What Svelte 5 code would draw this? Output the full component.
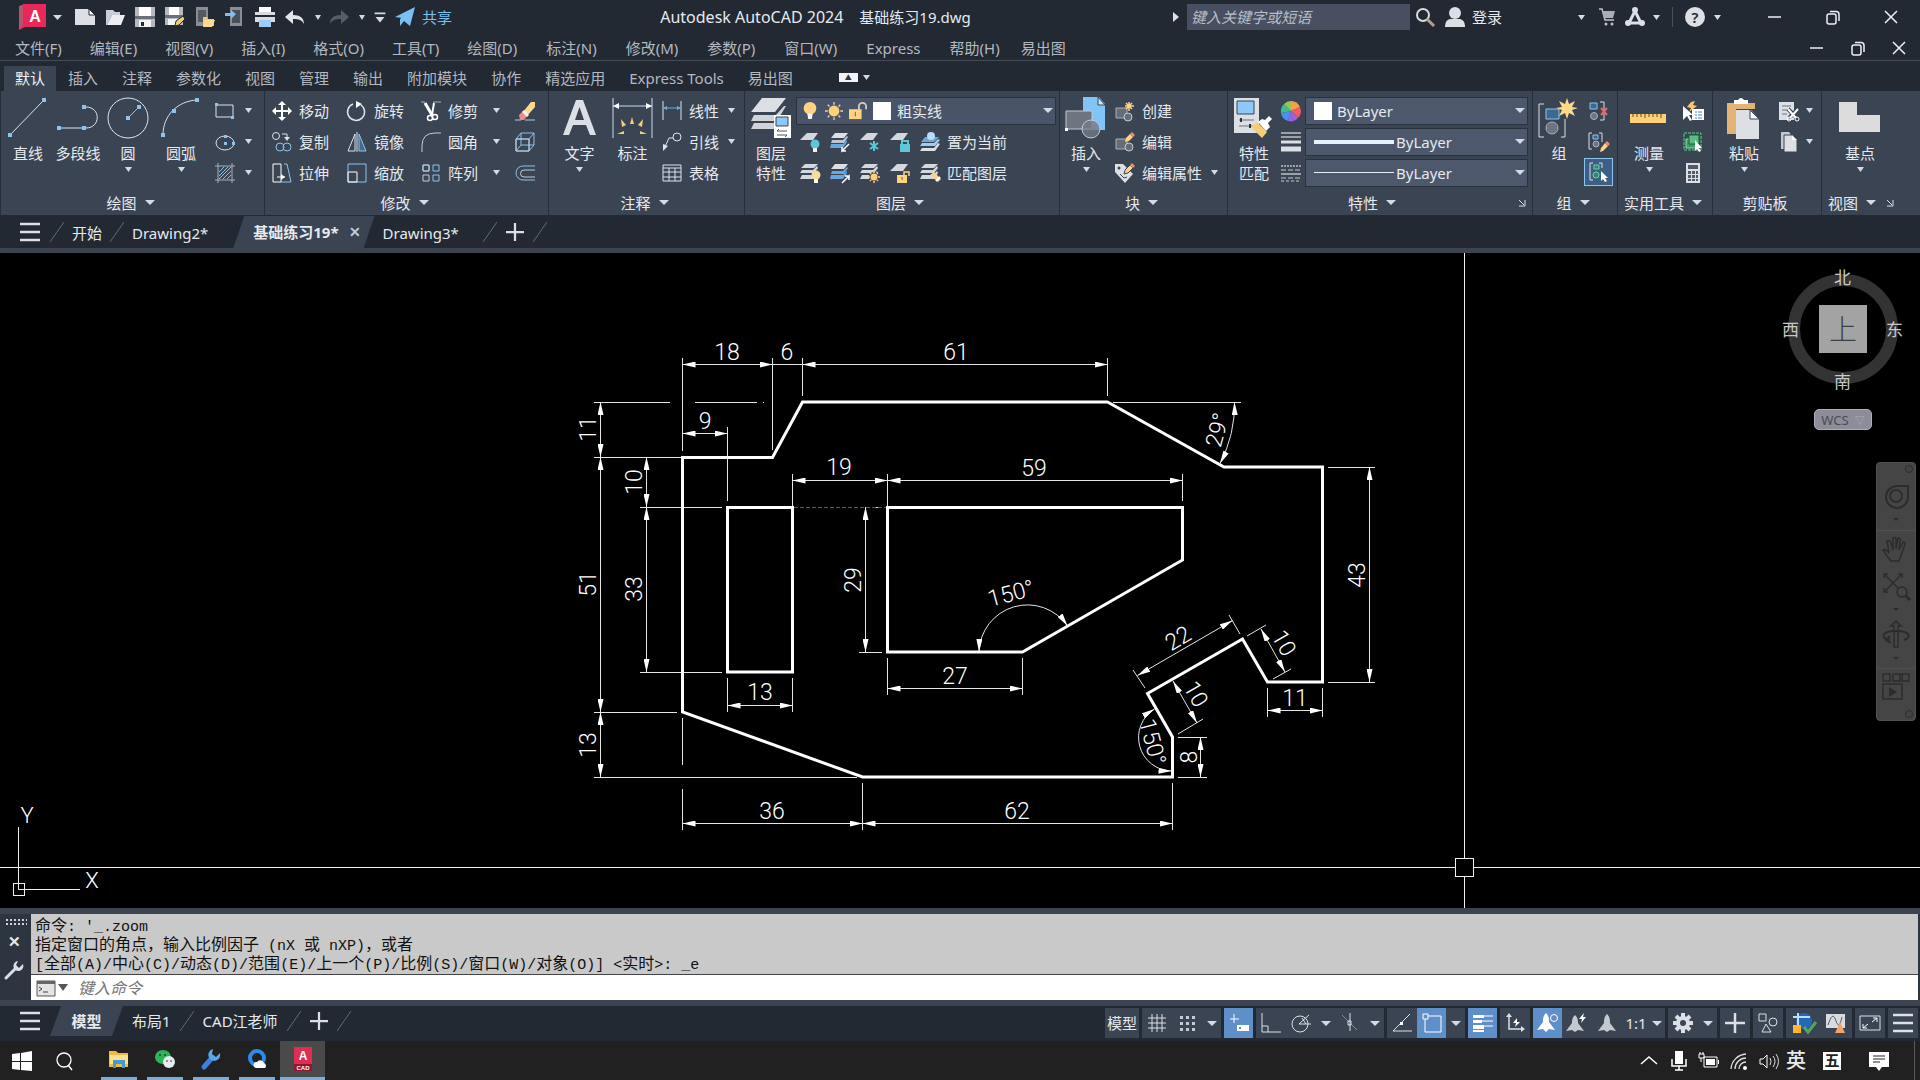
<script>
  // 20x20 and 40x40 line icons, keyed by command
  const icons = {
    // quick access
    newFile: '<path d="M0 2h13l7 6v10H0z" fill="#dcdfe4"/><path d="M14 2l6 6h-6z" fill="#fff" stroke="#222933"/>',
    open: '<path d="M1 18V3h7l2 2h5v3H7L2 18z" fill="#c9ced6"/><path d="M7 8h13l-4 10H2z" fill="#eceef2"/>',
    save: '<path d="M0 0h20v20H0z" fill="#b6bac0"/><path d="M4 0h12v9H4z" fill="#fff"/><path d="M0 9h20v3H0z" fill="#6a7079"/><path d="M4 13h12v7H4z" fill="#f4f4f4"/><path d="M6 15h3v4H6z" fill="#222933"/>',
    saveAs: '<path d="M0 0h18v18H0z" fill="#b6bac0"/><path d="M4 0h10v8H4z" fill="#fff"/><path d="M0 8h18v3H0z" fill="#6a7079"/><path d="M3 12h9v6H3z" fill="#f4f4f4"/><path d="M10 19l1-5 7-5 2 3-6 6z" fill="#f3cd7d" stroke="#222933"/>',
    openPhone: '<path d="M1 0h12v19H1z" fill="#8a8d92"/><path d="M3 3h8v12H3z" fill="#555a61"/><path d="M8 19V10h4l1 2h6v7z" fill="#f5c977"/><path d="M10 13h10l-3 7H8z" fill="#ffdb95"/>',
    savePhone: '<path d="M5 0h12v19H5z" fill="#8a8d92"/><path d="M7 3h8v13H7z" fill="#49505a"/><path d="M0 6h6V3l5 4-5 5V9H0z" fill="#7cc0f2"/>',
    print: '<path d="M4 0h12v6H4z" fill="#fff"/><path d="M0 5h20v10H0z" fill="#d8dbe0"/><path d="M0 8h20v2H0z" fill="#222933"/><path d="M4 13h12v7H4z" fill="#9ccdf5"/>',
    undo: '<path d="M8 3v5c7 0 11 3 11 9-2-4-5-5-11-5v5L0 10z" fill="#e1e4e9"/>',
    redo: '<path d="M12 3v5C5 8 1 11 1 17c2-4 5-5 11-5v5l8-7z" fill="#565d67"/>',
    customize: '<path d="M4 5h12v2H4zM5 10h10l-5 6z" fill="#d8dbe0"/>',
    plane: '<path d="M0 10L20 0l-5 19-6-5-4 5v-7l10-8-8 7z" fill="#7cc0f2"/>',
    magnifier: '<circle cx="8" cy="8" r="6" fill="none" stroke="#d8dbe0" stroke-width="2"/><path d="M12 12l7 7" stroke="#b0a08e" stroke-width="3"/>',
    user: '<circle cx="10" cy="6" r="6" fill="#dcdfe4"/><path d="M0 20c0-6 3-8 6-8h8c3 0 6 2 6 8z" fill="#dcdfe4"/>',
    cart: '<path d="M2 2h3l3 11h9" fill="none" stroke="#c0c4ca" stroke-width="1.5"/><path d="M5 4h13l-2 7H7z" fill="#a9adb4"/><circle cx="9" cy="17" r="1.5" fill="#c0c4ca"/><circle cx="15" cy="17" r="1.5" fill="#c0c4ca"/>',
    apps: '<path d="M10 4L4 16h12z" fill="none" stroke="#dcdfe4" stroke-width="3"/><circle cx="10" cy="3" r="3" fill="#dcdfe4"/><circle cx="3" cy="16" r="3" fill="#dcdfe4"/><circle cx="17" cy="16" r="3" fill="#dcdfe4"/>',
    minimize: '<path d="M3 10h13" stroke="currentColor" stroke-width="1.5"/>',
    restore: '<rect x="4" y="7" width="9" height="10" rx="2" fill="none" stroke="currentColor" stroke-width="1.5"/><path d="M7 4.500h6q3 0 3 3V14" fill="none" stroke="currentColor" stroke-width="1.5"/>',
    close: '<path d="M4 4l12 12M16 4L4 16" stroke="currentColor" stroke-width="1.5"/>',
    // draw
    line: '<path d="M3 38L37 3" stroke="#dce3ee"/><path d="M1 36h4v4H1zM35 1h4v4h-4z" fill="#8cc4f0"/>',
    polyline: '<path d="M2 31h27c15 0 15-21 0-21" fill="none" stroke="#dce3ee"/><path d="M0 29h4v4H0zM25 29h4v4h-4zM25 8h4v4h-4z" fill="#8cc4f0"/>',
    circle: '<circle cx="21" cy="21" r="20" fill="none" stroke="#dce3ee"/><path d="M21 21L32 10" stroke="#8cc4f0"/><path d="M19 19h4v4h-4zM30 8h4v4h-4z" fill="#8cc4f0"/>',
    arc: '<path d="M3 38C3 18 18 4 37 3" fill="none" stroke="#dce3ee"/><path d="M1 36h4v4H1zM12 12h4v4h-4zM35 1h4v4h-4z" fill="#8cc4f0"/>',
    rect: '<path d="M1 4h17v12H1z" fill="none" stroke="#dce3ee"/><path d="M0 2h3v3H0zM16 15h3v3h-3z" fill="#8cc4f0"/>',
    ellipse: '<ellipse cx="10" cy="11" rx="9" ry="7" fill="none" stroke="#dce3ee"/><path d="M9 3h3v3H9zM9 10h3v3H9zM17 10h3v3h-3z" fill="#8cc4f0"/>',
    hatch: '<path d="M3 0v20M17 0v20M0 3h20M0 17h20" stroke="#a8afba"/><path d="M4 9l5-5M4 13l9-9M4 16L16 4M8 16l8-8M12 16l4-4" stroke="#8cc4f0"/>',
    // modify
    move: '<path d="M10 0l4 4h-3v5h5V6l4 4-4 4v-3h-5v5h3l-4 4-4-4h3v-5H4v3l-4-4 4-4v3h5V4H6z" fill="#fff"/>',
    rotate: '<path d="M14 4a8.500 8.500 0 1 1-8-1" fill="none" stroke="#dce3ee" stroke-width="1.5"/><path d="M9 0l6 3-6 4z" fill="#fff"/>',
    trim: '<path d="M0 1h4M12 1h8" stroke="#a8afba"/><path d="M4 2l7 12" stroke="#fff" stroke-width="3"/><path d="M13 2l-2 12" stroke="#fff" stroke-width="2"/><circle cx="9" cy="17" r="2.500" fill="none" stroke="#fff" stroke-width="1.500"/><circle cx="14" cy="16" r="2.500" fill="none" stroke="#fff" stroke-width="1.500"/>',
    erase: '<path d="M0 19h6M10 19h10" stroke="#a8cdf0"/><path d="M8 11l8-10h4v5l-8 9z" fill="#ffd98c"/><path d="M4 14l4-4 5 4-4 5H5z" fill="#f08a84"/><path d="M7 11l2-2 5 5-2 2z" fill="#f2f2f2"/>',
    copy: '<circle cx="4" cy="4" r="3.500" fill="none" stroke="#dce3ee"/><path d="M10 2h5v4" fill="none" stroke="#dce3ee"/><path d="M12 5h6l-3 4z" fill="#dce3ee"/><circle cx="8" cy="15" r="4" fill="none" stroke="#8cc4f0"/><circle cx="15" cy="15" r="4" fill="none" stroke="#8cc4f0"/>',
    mirror: '<path d="M8 2v17H1z" fill="none" stroke="#dce3ee"/><path d="M12 2v17h7z" fill="#476a8c" stroke="#8cc4f0"/><path d="M10 0v20" stroke="#dce3ee"/>',
    fillet: '<path d="M1 20v-6Q1 1 14 1h6" fill="none" stroke="#c4cad4"/>',
    box: '<path d="M6 1h13v12l-5 6V7l5-6M1 7l5-6M14 7H1v12h13M6 1v12h13M6 13l-5 6" fill="none" stroke="#8cc4f0"/><path d="M1 7h13v12H1z" fill="none" stroke="#c4cad4"/>',
    stretch: '<path d="M1 1h8v18H1z" fill="none" stroke="#fff"/><path d="M12 1h3l4 18H9" fill="none" stroke="#8cc4f0"/><path d="M5 14h8" stroke="#fff"/><path d="M9 11l4 3-4 3z" fill="#fff"/>',
    scale: '<path d="M1 1h18v18H1z" fill="none" stroke="#8cc4f0"/><path d="M1 9h9v10H1z" fill="none" stroke="#fff"/>',
    array: '<path d="M2 2h6v6H2zM12 2h6v6h-6zM12 12h6v6h-6z" fill="none" stroke="#8cc4f0"/><path d="M2 12h6v6H2zM2 2h6v6H2z" fill="none" stroke="#c4cad4"/>',
    offset: '<path d="M20 3H8a7 7 0 0 0 0 14h12" fill="none" stroke="#8cc4f0"/><path d="M20 7H9a3.500 3.500 0 0 0 0 7h11" fill="none" stroke="#c4cad4"/>',
    // annotation
    text: '<path d="M4 38L17 3h7l13 35h-6l-4-10H14l-4 10zM16 23h9L20.500 10z" fill="#dcdfe6" fill-rule="evenodd"/>',
    dimension: '<path d="M1 1v40M40 1v40M1 9h39" stroke="#c9dcf0"/><path d="M1 9l6-3v6zM40 9l-6-3v6z" fill="#fff"/><g fill="#f5cd7a"><path d="M18 27l2-7 2 7zM10 30l-1-8 5 6zM30 30l1-8-5 6zM5 37l7-3v3zM35 37l-7-3v3z"/></g>',
    linear: '<path d="M1 0v19M19 0v19" stroke="#dce3ee"/><path d="M1 7h18" stroke="#6daee6"/><path d="M1 7l4-2v4zM19 7l-4-2v4z" fill="#6daee6"/>',
    leader: '<circle cx="15" cy="5" r="4" fill="none" stroke="#dce3ee"/><path d="M11 6H7L2 17" fill="none" stroke="#dce3ee"/><path d="M1 19v-7l5 2z" fill="#dce3ee"/>',
    table: '<path d="M1 2h18v16H1zM1 5h18M1 9h18M1 14h18M7 5v13M13 5v13" fill="none" stroke="#dce3ee"/>',
    // layers
    layerProps: '<path d="M12 1h24l-11 14H1z" fill="#dcdfe4"/><path d="M4 18h22l8-9h2l-9 15H1zM4 26h20v6H1z" fill="#d0d4da"/><path d="M24 18h17v23H24z" fill="#fff"/><path d="M26 20h12v9H26z" fill="#8cc8fa" stroke="#3b4453"/><path d="M27 34h10M27 38h10M29 32l-2 2M35 40l2-2" stroke="#555"/>',
    bulb: '<circle cx="10" cy="7" r="7" fill="#ffd284"/><path d="M7 13h6l-1 6H8z" fill="#f2f5fa"/>',
    sun: '<circle cx="10" cy="10" r="6" fill="#ffcf7a"/><path d="M10 0v3M10 17v3M0 10h3M17 10h3M3 3l2 2M15 15l2 2M3 17l2-2M15 5l2-2" stroke="#e8d5ae" stroke-width="1.5"/>',
    unlock: '<path d="M0 8h14v11H0z" fill="#ffd284"/><path d="M11 8V5a4 4 0 0 1 8 0v3" fill="none" stroke="#d5ceba" stroke-width="2"/><path d="M7 11v5" stroke="#6b5a36"/>',
    layOff: '<path d="M7 1h11l-5 7H0z" fill="#d4d8de"/><circle cx="15" cy="12" r="4.500" fill="#5bc7d8"/><path d="M13 16h4v4h-4z" fill="#f2f5fa"/>',
    layIso: '<path d="M5 1h13l-4 5H1z" fill="#dcdfe4"/><path d="M2 8h11l4-4 1 1-4 6H1z" fill="#c0c5cd"/><path d="M1 12h12l4-4v2l-4 6H0z" fill="#67a8df"/><path d="M19 12l-7 7v-4m0 4h4" stroke="#fff" stroke-width="1.500" fill="none"/>',
    layFreeze: '<path d="M7 1h11l-5 7H0z" fill="#d4d8de"/><path d="M14 9v10M10 11l8 6M18 11l-8 6" stroke="#5bc7d8" stroke-width="2"/>',
    layLock: '<path d="M7 1h11l-5 7H0z" fill="#d4d8de"/><path d="M10 12h10v8H10z" fill="#5bc7d8"/><path d="M12 12V9h6v3" fill="none" stroke="#5bc7d8" stroke-width="2"/>',
    layCurrent: '<path d="M5 5h14l-5 5H1z" fill="#67a8df"/><path d="M2 11h12l4-4 2 1-5 6H0z" fill="#9ccdf5"/><path d="M2 16h12l4-5 2 1-5 7H0z" fill="#dcdfe4"/><circle cx="11" cy="4" r="4" fill="#b9dcf9"/>',
    layOn: '<path d="M5 1h13l-4 4H1zM2 7h11l4-4 1 2-4 5H0zM2 12h11l4-4 1 2-4 6H0z" fill="#d4d8de"/><circle cx="16" cy="12" r="4.500" fill="#f6dc96"/><path d="M14 16h4v4h-4z" fill="#fff"/>',
    layUniso: '<path d="M5 1h13l-4 5H1z" fill="#dcdfe4"/><path d="M2 8h11l4-4 1 1-4 6H1zM1 12h12l4-4v2l-4 6H0z" fill="#67a8df"/><path d="M12 20l7-7v4m0-4h-4" stroke="#fff" stroke-width="1.500" fill="none"/>',
    layThaw: '<path d="M5 1h13l-4 4H1zM2 7h11l4-4 1 2-4 5H0zM2 12h11l4-4 1 2-4 6H0z" fill="#d4d8de"/><circle cx="14" cy="14" r="5" fill="#3b4453"/><circle cx="14" cy="14" r="3.500" fill="#ffcf7a"/><path d="M14 8v2M14 18v2M8 14h2M18 14h2M10 10l1 1M18 10l-1 1M10 18l1-1M18 18l-1-1" stroke="#ffcf7a" stroke-width="1.5"/>',
    layUnlock: '<path d="M7 1h11l-5 7H0z" fill="#d4d8de"/><path d="M7 12h10v8H7z" fill="#ffd284"/><path d="M14 12V9h5v4" fill="none" stroke="#ffd284" stroke-width="1.5"/><path d="M12 14v3" stroke="#6b5a36"/>',
    layMatch: '<path d="M5 1h13l-4 4H1zM2 7h11l4-4 1 2-4 5H0zM2 12h11l4-4 1 2-4 6H0z" fill="#d4d8de"/><path d="M10 12l4-3 7 7-3 3z" fill="#f5d494"/><path d="M16 18l4-4" stroke="#fff" stroke-width="2"/>',
    // block
    insert: '<path d="M18 0h16l6 7v26H18z" fill="#82c4f7"/><path d="M33 0v8h7z" fill="#cbe6fc" stroke="#3b4453"/><path d="M1 14h26v18H1z" fill="#6e7480" stroke="#c4cad4"/><circle cx="26" cy="32" r="9" fill="#747b87" fill-opacity=".8" stroke="#c4cad4"/><path d="M0 31h3v3H0z" fill="#fff"/>',
    create: '<path d="M1 7h11v10H1z" fill="#666d79" stroke="#a9b0bb"/><circle cx="13" cy="16" r="4" fill="#666d79" stroke="#c4cad4"/><path d="M14 1v9M10 5h9M11 2l6 6M17 2l-6 6" fill="none" stroke="#ffd284" stroke-width="1.500"/>',
    edit: '<path d="M1 7h11v10H1z" fill="#666d79" stroke="#a9b0bb"/><circle cx="14" cy="15" r="4" fill="#666d79" stroke="#c4cad4"/><path d="M10 10l1-4 4-4 3 3-4 4z" fill="#ffd284"/><path d="M15 2l2-2 3 3-2 2z" fill="#ee8b78"/>',
    editAttr: '<path d="M0 1h8l10 10-8 9L0 9z" fill="#dcdfe4"/><circle cx="4" cy="5" r="1.500" fill="#3b4453"/><path d="M9 11l1-4 5-5 3 3-5 5z" fill="#ffd284" stroke="#3b4453"/><path d="M15 2l2-2 3 3-2 2z" fill="#ee8b78"/><path d="M5 11l4 4 3-1" stroke="#3b4453" fill="none"/>',
    // properties
    matchProps: '<path d="M1 1h25v35H1z" fill="#dcdfe4"/><path d="M4 4h17v13H4z" fill="#8cc8fa" stroke="#3b4453"/><path d="M6 23h15M6 29h15" stroke="#6a7079"/><path d="M8 21v4M17 27v4" stroke="#333" stroke-width="2"/><path d="M18 30l6-5 10 10-5 6z" fill="#f5cd7a"/><path d="M25 25l4-3 3 1 4-4 3 3-4 4 2 4-4 4z" fill="#fff"/>',
    wheel: '<path d="M10 10V0a10 10 0 0 1 9 6z" fill="#f6a04c"/><path d="M10 10l9-4a10 10 0 0 1-2 11z" fill="#ef5d60"/><path d="M10 10l7 7a10 10 0 0 1-10 3z" fill="#9c5fe0"/><path d="M10 10L7 20a10 10 0 0 1-7-8z" fill="#4c8ff0"/><path d="M10 10L0 12a10 10 0 0 1 3-9z" fill="#3cbf8c"/><path d="M10 10L3 3a10 10 0 0 1 7-3z" fill="#9bc553"/>',
    weights: '<path d="M0 1h20M0 5h20" stroke="#fff"/><path d="M0 10h20" stroke="#dcdfe4" stroke-width="3"/><path d="M0 17h20" stroke="#dcdfe4" stroke-width="5"/>',
    linetypes: '<path d="M0 3h20" stroke-dasharray="2 1" stroke="#fff"/><path d="M0 7h20M0 15h20" stroke-dasharray="5 2" stroke="#c4cad4"/><path d="M0 11h20" stroke="#fff"/><path d="M0 18h20" stroke-dasharray="3 2" stroke="#c4cad4"/>',
    // groups and utilities
    group: '<path d="M6 7H1v33h5M23 40h4V22" fill="none" stroke="#dcdfe4"/><path d="M8 12h13v10H8z" fill="#3d6890" stroke="#8cc4f0"/><circle cx="14" cy="31" r="6" fill="#6e7480" stroke="#a9b0bb"/><path d="M29 1l2 6 6-3-3 6 6 1-6 2 3 6-6-3-2 6-2-6-6 3 3-6-6-2 6-1-3-6 6 3z" fill="#ffd88c"/>',
    ungroup: '<path d="M1 2h7v6H1z" fill="#3d6890" stroke="#8cc4f0"/><circle cx="5" cy="15" r="3.500" fill="#6e7480" stroke="#a9b0bb"/><path d="M11 1h4v18h-4" fill="none" stroke="#dcdfe4"/><path d="M12 7l6 7M18 7l-6 7" stroke="#e8696b" stroke-width="2"/>',
    groupEdit: '<path d="M3 1H0v16h3M10 1h3v9" fill="none" stroke="#dcdfe4"/><path d="M4 3h5v4H4z" fill="#3d6890" stroke="#8cc4f0"/><circle cx="7" cy="12" r="3" fill="#6e7480" stroke="#a9b0bb"/><path d="M11 20l1-4 4-5 3 3-5 5z" fill="#ffd284"/><path d="M16 11l2-2 3 3-2 2z" fill="#ee8b78"/>',
    groupSelect: '<path d="M4 1H1v17h3M10 1h3v5" fill="none" stroke="#dcdfe4"/><path d="M5 3h5v4H5z" fill="#2c8a6a" stroke="#71cda8"/><circle cx="7" cy="13" r="3" fill="#2c8a6a" stroke="#71cda8"/><path d="M12 9v10l2-2 2 3 2-1-2-3h3z" fill="#fff"/>',
    measure: '<path d="M2 17h36v9H2z" fill="#ffcf7a"/><path d="M5 17v3M9 17v3M13 17v3M17 17v4M21 17v3M25 17v3M29 17v3M33 17v4" stroke="#5d4a22"/>',
    quickSelect: '<path d="M8 1l-4 5 4 1-2 4 8-6-4-1 2-4z" fill="#ffc46c"/><path d="M0 5v14l4-4 3 5 2-1-3-5h4z" fill="#fff"/><path d="M9 8h12v11H9z" fill="#fff"/><path d="M12 11h2M12 14h2M12 17h2M15 11h4M15 14h4M15 17h4" stroke="#3d7fc0"/>',
    selectAll: '<path d="M1 1h17v17H1z" fill="none" stroke="#5fd08c" stroke-dasharray="3 1"/><path d="M3 7h10v9H3z" fill="#3d9c66" stroke="#8be0ad"/><path d="M6 3h10v9H6z" fill="#5cbb84" stroke="#1f5d3b"/><path d="M12 8v11l2-2 2 3 2-1-2-3h3z" fill="#fff"/>',
    calculator: '<path d="M3 0h14v20H3z" fill="#dcdfe4"/><path d="M5 2h10v4H5z" fill="#51596a"/><path d="M5 8h3v3H5zM9 8h3v3H9zM13 8h2v3h-2zM5 12h3v3H5zM9 12h3v3H9zM13 12h2v3h-2zM5 16h3v2H5zM9 16h3v2H9zM13 16h2v2h-2z" fill="#51596a"/>',
    paste: '<path d="M4 6h28v6H13v25H4z" fill="#e2b377"/><path d="M11 3h4q3-4 6 0h4v4H11z" fill="#fff"/><path d="M13 13h15l8 9v20H13z" fill="#dcdfe4"/><path d="M27 13v9h9z" fill="#fff" stroke="#3b4453"/>',
    cut: '<path d="M1 1h15v18H1z" fill="#dcdfe4"/><path d="M4 5h9M4 9h6M4 13h5" stroke="#6a7079"/><path d="M10 8l9 9M20 8l-9 9" stroke="#3b4453" stroke-width="4"/><path d="M10 8l8 9M20 8l-8 9" stroke="#fff" stroke-width="2"/><circle cx="11" cy="18" r="2" fill="none" stroke="#fff"/><circle cx="19" cy="18" r="2" fill="none" stroke="#fff"/>',
    copyClip: '<path d="M3 0h8l2 3v14H3z" fill="#c4cad4"/><path d="M6 3h8l5 5v12H6z" fill="#dcdfe4" stroke="#3b4453"/><path d="M14 3v5h5z" fill="#fff"/>',
    base: '<path d="M0 5h18v13h23v17H0z" fill="#dcdcdc"/>',
    // status bar
    grid: '<path d="M5 1v18M10 1v18M15 1v18M1 5h18M1 10h18M1 15h18" stroke="#dcdfe6"/>',
    snap: '<path d="M3 3h3v3H3zM9 3h3v3H9zM15 3h3v3h-3zM3 9h3v3H3zM9 9h3v3H9zM15 9h3v3h-3zM3 15h3v3H3zM9 15h3v3H9zM15 15h3v3h-3z" fill="#c4cad4"/>',
    dynInput: '<path d="M5 1v9M1 6h9" stroke="#fff"/><path d="M8 12h12v6H8z" fill="#fff"/><path d="M10 14h2v2h-2z" fill="#5f8fc9"/>',
    ortho: '<path d="M1 0v19h19M1 13h6v6" fill="none" stroke="#dcdfe6"/>',
    polar: '<circle cx="9" cy="11" r="8" fill="none" stroke="#dcdfe6"/><path d="M20 11H8l10-9M11 5l4 6" fill="none" stroke="#dcdfe6"/>',
    iso: '<path d="M10 0v18" stroke="#dcdfe6"/><path d="M2 2l15 15" stroke="#a3837c"/><path d="M8 8h3v4H8z" fill="none" stroke="#dcdfe6"/>',
    track: '<path d="M18 1L1 18h19" fill="none" stroke="#dcdfe6"/><path d="M8 9h3v3H8z" fill="#fff"/>',
    osnap: '<path d="M3 3h16v16H3z" fill="none" stroke="#fff"/><path d="M1 1h5v5H1z" fill="#5f8fc9" stroke="#fff"/>',
    lineWeight: '<path d="M0 3h20M0 8h20M0 13h20" stroke="#fff"/><path d="M0 2h11v3H0zM0 7h9v3H0zM0 12h11v4H0zM0 17h11v2H0z" fill="#fff"/>',
    ucs: '<path d="M4 3v13h13" fill="none" stroke="#dcdfe6" stroke-width="1.5"/><path d="M1 4l3-4 3 4zM16 13l4 3-4 3z" fill="#dcdfe6"/><path d="M12 5l-4 5h3l-1 4 5-5h-3z" fill="#fff"/>',
    annoVis: '<path d="M8 0c3 3 3 6 3 9l6 8-6-1-3 3-3-3-6 1 6-8c0-3 0-6 3-9z" fill="#fff"/><circle cx="16" cy="5" r="3.500" fill="none" stroke="#fff"/>',
    annoAuto: '<path d="M8 2c3 3 3 5 3 8l6 8-6-1-3 2-3-2-6 1 6-8c0-3 0-5 3-8z" fill="#c4c8d0"/><path d="M17 0l-5 6h3l-1 4 5-6h-3z" fill="#fff"/>',
    annoScale: '<path d="M10 1c3 3 3 6 3 9l6 8-6-1-3 2-3-2-6 1 6-8c0-3 0-6 3-9z" fill="#c4c8d0"/>',
    gear: '<circle cx="10" cy="10" r="5" fill="none" stroke="#dcdfe6" stroke-width="4"/><path d="M10 0v4M10 16v4M0 10h4M16 10h4M3 3l3 3M14 14l3 3M3 17l3-3M14 6l3-3" stroke="#dcdfe6" stroke-width="4"/>',
    plus: '<path d="M10 0v20M0 10h20" stroke="#dcdfe6" stroke-width="2.500"/>',
    isolate: '<path d="M1 1h7v7H1zM4 19h9L8 11z" fill="none" stroke="#dcdfe6"/><circle cx="15" cy="9" r="4" fill="none" stroke="#dcdfe6"/>',
    hardware: '<circle cx="11" cy="8" r="8" fill="#2468b8"/><path d="M5 0v13M0 4h17" stroke="#bcdcf7" stroke-width="2"/><path d="M0 12h8v8H0z" fill="#ffb733"/><path d="M11 14l4 5 8-10" fill="none" stroke="#51a85b" stroke-width="3"/>',
    monitor: '<path d="M0 1h19v14H0z" fill="#d8dbe0"/><path d="M2 12c4-12 6-10 8-4s4 5 6-4" fill="none" stroke="#555"/><path d="M14 9l5 11H9z" fill="#f2a36a"/>',
    fullscreen: '<path d="M0 3h20v14H0z" fill="none" stroke="#dcdfe6"/><path d="M12 9l5-4m-4 0h4v4M8 11l-5 4m4 0H3v-4" fill="none" stroke="#fff"/>',
    menu: '<path d="M0 2h20M0 10h20M0 18h20" stroke="#dcdfe6" stroke-width="2.500"/>',
    // command line
    wrench: '<path d="M2 18L12 8" stroke="#dcdfe6" stroke-width="3" stroke-linecap="round"/><path d="M19 4a5 5 0 1 1-5-3l-2 4 3 3z" fill="#dcdfe6"/>',
    prompt: '<path d="M1 3h18v15H1z" fill="#e4e4e4" stroke="#555"/><path d="M1 3h18v3H1z" fill="#666"/><path d="M3 9l3 2-3 2M7 14h5" fill="none" stroke="#444"/>',
    // taskbar
    windows: '<path d="M0 3l8-1v8H0zM9 2l11-2v10H9zM0 11h8v8l-8-1zM9 11h11v9L9 19z" fill="#fff"/>',
    find: '<circle cx="10" cy="9" r="7" fill="none" stroke="#fff" stroke-width="1.300"/><path d="M14 14l4 5" stroke="#fff" stroke-width="1.500"/>',
    explorer: '<path d="M0 2h7l2 2h10v14H0z" fill="#f2b93c"/><path d="M1 6h18v9H1z" fill="#ffe08a"/><path d="M4 11h12v8h-3v-4H7v4H4z" fill="#3f9bd8"/>',
    wechat: '<ellipse cx="8" cy="8" rx="8" ry="7" fill="#2fb357"/><circle cx="5" cy="6" r="1" fill="#143"/><circle cx="10" cy="6" r="1" fill="#143"/><ellipse cx="14" cy="13" rx="6" ry="6" fill="#e8ecee"/><circle cx="12" cy="12" r="1" fill="#777"/><circle cx="16" cy="12" r="1" fill="#777"/>',
    tool: '<path d="M3 18l7-8" stroke="#3f7fe0" stroke-width="5" stroke-linecap="round"/><path d="M19 4a6 6 0 1 1-7-4l-1 5 4 3z" fill="#5aa6e8"/>',
    browser: '<circle cx="10" cy="9" r="7" fill="none" stroke="#2e8be8" stroke-width="4"/><path d="M9 19a3 3 0 0 1 1-6 4 4 0 0 1 7 1 3 3 0 0 1 1 5z" fill="#fff"/>',
    chevron: '<path d="M2 13l8-7 8 7" fill="none" stroke="#fff" stroke-width="1.500"/>',
    mic: '<path d="M6 0h8v13H6z" fill="#fff"/><path d="M3 8v7h14V8M10 15v4M6 19h8" fill="none" stroke="#fff" stroke-width="1.500"/>',
    battery: '<path d="M5 6h13v10H5z" fill="none" stroke="#fff"/><path d="M7 8h9v6H7z" fill="#fff"/><path d="M19 9h1v4h-1z" fill="#fff"/><path d="M0 3h5v4H0zM1 1v2M4 1v2M2 7v4" fill="none" stroke="#fff"/>',
    wifi: '<path d="M2 18A16 16 0 0 1 17 3M6 18A11 11 0 0 1 17 7M10 18a7 7 0 0 1 7-7" fill="none" stroke="#ddd" stroke-width="1.300"/><circle cx="16" cy="17" r="2" fill="#fff"/>',
    sound: '<path d="M1 8h3l4-4v13l-4-4H1z" fill="none" stroke="#fff"/><path d="M11 7q2 3 0 7M14 5q4 5 0 11M17 3q5 7 0 15" fill="none" stroke="#ddd"/>',
    notice: '<path d="M0 1h20v15h-7l-3 4-3-4H0z" fill="#fff"/><path d="M4 5h12M4 8h12M4 11h7" stroke="#222"/>',
    // navigation bar
    steering: '<path d="M24 4h-9a11 11 0 1 0 11 11V4z" fill="none" stroke="#2c2c2c" stroke-width="2"/><circle cx="14" cy="14" r="6" fill="none" stroke="#2c2c2c" stroke-width="2"/>',
    pan: '<path d="M9 26c-3-4-6-7-8-11 2-1 4 0 6 3L5 6c2-1 3 0 4 2l2 7V3c2-1 3 0 3 1v10l2-11c2 0 3 1 2 3l-1 9 4-8c2 0 2 1 2 2l-3 9-3 8z" fill="none" stroke="#2c2c2c" stroke-width="1.500"/>',
    zoomExt: '<path d="M2 2l18 18M20 2L2 20M2 6V2h4M16 2h4v4M2 16v4h4" fill="none" stroke="#2c2c2c" stroke-width="1.500"/><circle cx="20" cy="20" r="5" fill="#454545" stroke="#2c2c2c" stroke-width="1.500"/><path d="M24 24l4 4" stroke="#2c2c2c" stroke-width="3"/>',
    orbit: '<path d="M12 27V6H9l5-5 5 5h-3v21z" fill="none" stroke="#2c2c2c" stroke-width="1.500"/><path d="M22 20c8-3 6-9-8-9S-3 18 8 20M8 16l-4 4 5 3" fill="none" stroke="#2c2c2c" stroke-width="2"/>',
    motion: '<path d="M1 1h7v7H1zM11 1h7v7h-7zM20 1h7v7h-7zM1 11h19v15H1z" fill="none" stroke="#2c2c2c" stroke-width="1.500"/><path d="M7 14l8 5-8 5z" fill="#2c2c2c"/>',
  };

  const menus = ["文件(F)", "编辑(E)", "视图(V)", "插入(I)", "格式(O)", "工具(T)", "绘图(D)", "标注(N)", "修改(M)", "参数(P)", "窗口(W)", "Express", "帮助(H)", "易出图"];
  const tabs = ["默认", "插入", "注释", "参数化", "视图", "管理", "输出", "附加模块", "协作", "精选应用", "Express Tools", "易出图"];

  const quick = [
    ["newFile", "新建"],
    ["open", "打开"],
    ["save", "保存"],
    ["saveAs", "另存为"],
    ["openPhone", "从 Web 打开"],
    ["savePhone", "保存到 Web"],
    ["print", "打印"],
  ];

  const modify = [
    ["move", "移动"],
    ["rotate", "旋转"],
    ["trim", "修剪", true],
    ["erase", ""],
    ["copy", "复制"],
    ["mirror", "镜像"],
    ["fillet", "圆角", true],
    ["box", ""],
    ["stretch", "拉伸"],
    ["scale", "缩放"],
    ["array", "阵列", true],
    ["offset", ""],
  ];

  const statusGroups = [
    [["grid"], ["snap"], ["caret"]],
    [["dynInput", true]],
    [["ortho"], ["polar"], ["caret"], ["iso"], ["caret"]],
    [["track"], ["osnap", true], ["caret"]],
    [["lineWeight", true]],
    [["ucs"]],
    [["annoVis", true], ["annoAuto"], ["annoScale"], ["ratio"]],
    [["gear"], ["caret"]],
    [["plus"]],
    [["isolate"]],
    [["hardware"], ["monitor"]],
    [["fullscreen"]],
    [["menu"]],
  ];

  const history = [
    "命令: '_.zoom",
    "指定窗口的角点，输入比例因子 (nX 或 nXP)，或者",
    "[全部(A)/中心(C)/动态(D)/范围(E)/上一个(P)/比例(S)/窗口(W)/对象(O)] <实时>: _e",
  ].map((line) => line.split(/([\u4e00-\u9fff，]+)/));

  // part outlines
  const outline = "682.5,457.500 772.5,457.500 802.5,402 1107.5,402 1224,467 1322.5,467 1322.5,682 1267.5,682 1242.5,639 1147.500,693.5 1172.5,737 1172.5,777 862.5,777 682.5,712";
  const slot = "727.5,507.5 792.5,507.5 792.5,672 727.5,672";
  const pocket = "887.5,507.5 1182.5,507.5 1182.5,560 1022.5,652 887.5,652";

  // dimension line from x1,y1 to x2,y2; text anchored at tx,ty
  const dims = [
    [682.5, 364.5, 772.5, 364.5, "18", 727, 360, 0],
    [802.5, 364.5, 1107.5, 364.5, "61", 956, 360, 0],
    [682.5, 433.5, 727.5, 433.5, "9", 705, 429, 0],
    [792.5, 480.5, 887.5, 480.5, "19", 839, 475, 0],
    [887.5, 480.5, 1182.5, 480.5, "59", 1034, 476, 0],
    [887.5, 688.5, 1022.5, 688.5, "27", 955, 684, 0],
    [727.5, 705.5, 792.5, 705.5, "13", 760, 700, 0],
    [682.5, 823.5, 862.5, 823.5, "36", 772, 819, 0],
    [862.5, 823.5, 1172.5, 823.5, "62", 1017, 819, 0],
    [1267.5, 710.5, 1322.5, 710.5, "11", 1295, 706, 0],
    [600.5, 402, 600.5, 457, "11", 596, 429, -90],
    [600.5, 457, 600.5, 712, "51", 596, 584, -90],
    [600.5, 712, 600.5, 777, "13", 596, 745, -90],
    [646.5, 457, 646.5, 507, "10", 642, 482, -90],
    [646.5, 507, 646.5, 672, "33", 642, 589, -90],
    [865.5, 507, 865.5, 652, "29", 861, 580, -90],
    [1369.5, 467, 1369.5, 682, "43", 1365, 575, -90],
    [1200.5, 737, 1200.5, 777, "8", 1197, 757, -90],
    [1137.5, 675.5, 1232.5, 620.5, "22", 1182, 645, -30],
    [1261, 629, 1285, 672, "10", 1277, 647, 60],
    [1173, 681, 1197, 723, "10", 1189, 698, 60],
  ];

  const arcs = [
    ["M979 652A48.500 48.500 0 0 1 1067.500 626", "150°", 1013, 601, -15],
    ["M1154.500 709A33.500 33.500 0 0 0 1171.500 771", "150°", 1145, 744, 75],
    ["M1234.500 402A127 127 0 0 1 1220 463.500", "29°", 1225, 432, -75],
  ];

  const extensions =
    "M682.5 358V451M772.5 358V450M802.5 358V396M1107.5 358V396M727.5 427V501M792.5 474V507M887.5 474V507M1182.5 474V501" +
    "M887.5 658V695M1022.5 658V695M727.5 678V712M792.5 678V712M682.5 718V765M682.5 789V830M862.5 783V830M1172.5 783V830M1267.5 688V717M1322.5 688V717" +
    "M594 402.5H670M695 402.5H757M763 402.5H764M594 457.5H682M640 507.5H722M640 672.5H722M594 712.5H677M594 777.5H857M859 652.5H882M875 507.5H880" +
    "M1113 402.5H1241M1328 467.5H1375M1328 682.5H1375M1178 737.5H1207M1178 777.5H1207M772.5 364.5H802.5" +
    "M1133 670L1145 688M1229 615L1240 634M1247 636L1266 625M1273 679L1291 669M1178 734L1203 719";
</script>

<svelte:head>
  <title>Autodesk AutoCAD 2024</title>
</svelte:head>

{#snippet icon(name, size = 20)}
  <svg class="icon" width={size} height={size} viewBox="0 0 {size > 30 ? 42 : size > 24 ? 28 : 20} {size > 30 ? 42 : size > 24 ? 28 : 20}" aria-hidden="true">
    {@html icons[name]}
  </svg>
{/snippet}

{#snippet caret(w = 7)}
  <svg class="icon" width={w} height="5" viewBox="0 0 10 6" preserveAspectRatio="none" aria-hidden="true">
    <path d="M0 0h10L5 6z" fill="#d3dbe6" />
  </svg>
{/snippet}

{#snippet big(name, label, drop, second)}
  <button class="big">
    {@render icon(name, 42)}
    <span class="big-label">{label}{#if second}<br />{second}{/if}</span>
    {#if drop}{@render caret()}{/if}
  </button>
{/snippet}

{#snippet tool(name, label, drop)}
  <div class="tool">
    <button class="tool-main" aria-label={label || name}>
      {@render icon(name)}
      {#if label}<span>{label}</span>{/if}
    </button>
    {#if drop}
      <button class="tool-drop" aria-label="更多">{@render caret()}</button>
    {/if}
  </div>
{/snippet}

{#snippet title(label, drop = true, launcher = false)}
  <div class="panel-title">
    <button class="panel-name">{label}{#if drop}{@render caret(10)}{/if}</button>
    {#if launcher}
      <button class="launcher" aria-label="设置">
        <svg class="icon" width="8" height="8" viewBox="0 0 8 8"><path d="M1 1l5 5M7 1v6H1" fill="none" stroke="#dcdfe6" /></svg>
      </button>
    {/if}
  </div>
{/snippet}

{#snippet windowButtons()}
  <button aria-label="最小化">{@render icon("minimize")}</button>
  <button aria-label="还原">{@render icon("restore")}</button>
  <button aria-label="关闭">{@render icon("close")}</button>
{/snippet}

<div class="app">
  <header class="titlebar">
    <button class="logo-btn" aria-label="应用程序菜单">
      <svg class="icon" width="30" height="28" viewBox="0 0 30 28">
        <path d="M1 3l6-2v22l-6 4z" fill="#b9536b" />
        <path d="M5 1h23v23H7l-6 3 4-5z" fill="#e8275a" />
        <text x="17" y="19" class="logo-a">A</text>
      </svg>
      {@render caret(9)}
    </button>
    <div class="quick">
      {#each quick as [name, label]}
        <button aria-label={label}>{@render icon(name)}</button>
      {/each}
      <button aria-label="放弃">{@render icon("undo")}</button>
      <button class="mini" aria-label="放弃列表">{@render caret(6)}</button>
      <button aria-label="重做">{@render icon("redo")}</button>
      <button class="mini" aria-label="重做列表">{@render caret(6)}</button>
      <button class="mini customize" aria-label="自定义">{@render icon("customize", 18)}</button>
    </div>
    <button class="share">{@render icon("plane")}<span>共享</span></button>
    <h1><span>Autodesk AutoCAD 2024</span><span class="doc">基础练习19.dwg</span></h1>
    <svg class="icon" width="6" height="10" viewBox="0 0 6 10"><path d="M0 0l6 5-6 5z" fill="#dcdfe6" /></svg>
    <input class="search" type="text" placeholder="键入关键字或短语" aria-label="搜索" />
    <button class="find" aria-label="查找">{@render icon("magnifier")}</button>
    <button class="login">{@render icon("user")}<span>登录</span>{@render caret()}</button>
    <button class="cart" aria-label="购物车">{@render icon("cart")}</button>
    <button class="apps" aria-label="应用">{@render icon("apps")}{@render caret()}</button>
    <button class="help" aria-label="帮助"><span class="help-mark">?</span>{@render caret()}</button>
    <div class="win win-main">{@render windowButtons()}</div>
  </header>

  <nav class="menubar">
    {#each menus as menu}
      <button>{menu}</button>
    {/each}
    <div class="win win-doc">{@render windowButtons()}</div>
  </nav>

  <nav class="tabs">
    {#each tabs as tab, i}
      <button class:active={i === 0}>{tab}</button>
    {/each}
    <button class="collapse" aria-label="最小化功能区"><span>▲</span>{@render caret()}</button>
  </nav>

  <section class="ribbon">
    <div class="panel draw">
      <div class="panel-body">
        {@render big("line", "直线")}
        {@render big("polyline", "多段线")}
        {@render big("circle", "圆", true)}
        {@render big("arc", "圆弧", true)}
        <div class="col">
          {@render tool("rect", "", true)}
          {@render tool("ellipse", "", true)}
          {@render tool("hatch", "", true)}
        </div>
      </div>
      {@render title("绘图")}
    </div>

    <div class="panel modify">
      <div class="panel-body">
        {#each modify as [name, label, drop]}
          {@render tool(name, label, drop)}
        {/each}
      </div>
      {@render title("修改")}
    </div>

    <div class="panel annotate">
      <div class="panel-body">
        {@render big("text", "文字", true)}
        {@render big("dimension", "标注")}
        <div class="col">
          {@render tool("linear", "线性", true)}
          {@render tool("leader", "引线", true)}
          {@render tool("table", "表格")}
        </div>
      </div>
      {@render title("注释")}
    </div>

    <div class="panel layers">
      <div class="panel-body">
        {@render big("layerProps", "图层", false, "特性")}
        <div class="col">
          <div class="row">
            <label class="combo">
              {@render icon("bulb", 18)}
              {@render icon("sun", 18)}
              {@render icon("unlock", 18)}
              <span class="swatch"></span>
              <select aria-label="图层"><option>粗实线</option></select>
              {@render caret(10)}
            </label>
          </div>
          <div class="row icons">
            {#each ["layOff", "layIso", "layFreeze", "layLock"] as name}
              {@render tool(name, "")}
            {/each}
            {@render tool("layCurrent", "置为当前")}
          </div>
          <div class="row icons">
            {#each ["layOn", "layUniso", "layThaw", "layUnlock"] as name}
              {@render tool(name, "")}
            {/each}
            {@render tool("layMatch", "匹配图层")}
          </div>
        </div>
      </div>
      {@render title("图层")}
    </div>

    <div class="panel block">
      <div class="panel-body">
        {@render big("insert", "插入", true)}
        <div class="col">
          {@render tool("create", "创建")}
          {@render tool("edit", "编辑")}
          {@render tool("editAttr", "编辑属性", true)}
        </div>
      </div>
      {@render title("块")}
    </div>

    <div class="panel props">
      <div class="panel-body">
        {@render big("matchProps", "特性", false, "匹配")}
        <div class="col">
          <div class="row">
            {@render icon("wheel")}
            <label class="combo">
              <span class="swatch"></span>
              <select aria-label="颜色"><option>ByLayer</option></select>
              {@render caret(10)}
            </label>
          </div>
          <div class="row">
            {@render icon("weights")}
            <label class="combo">
              <span class="rule thick"></span>
              <select aria-label="线宽"><option>ByLayer</option></select>
              {@render caret(10)}
            </label>
          </div>
          <div class="row">
            {@render icon("linetypes")}
            <label class="combo">
              <span class="rule"></span>
              <select aria-label="线型"><option>ByLayer</option></select>
              {@render caret(10)}
            </label>
          </div>
        </div>
      </div>
      {@render title("特性", true, true)}
    </div>

    <div class="panel group">
      <div class="panel-body">
        {@render big("group", "组")}
        <div class="col">
          {@render tool("ungroup", "")}
          {@render tool("groupEdit", "")}
          <div class="pressed">{@render tool("groupSelect", "")}</div>
        </div>
      </div>
      {@render title("组")}
    </div>

    <div class="panel utils">
      <div class="panel-body">
        {@render big("measure", "测量", true)}
        <div class="col">
          {@render tool("quickSelect", "")}
          {@render tool("selectAll", "")}
          {@render tool("calculator", "")}
        </div>
      </div>
      {@render title("实用工具")}
    </div>

    <div class="panel clip">
      <div class="panel-body">
        {@render big("paste", "粘贴", true)}
        <div class="col">
          {@render tool("cut", "", true)}
          {@render tool("copyClip", "", true)}
        </div>
      </div>
      {@render title("剪贴板", false)}
    </div>

    <div class="panel view">
      <div class="panel-body">
        {@render big("base", "基点", true)}
      </div>
      {@render title("视图", true, true)}
    </div>
  </section>

  <nav class="filetabs">
    <button class="burger" aria-label="文件选项卡菜单">{@render icon("menu")}</button>
    <i class="slash"></i>
    <button class="file">开始</button>
    <i class="slash"></i>
    <button class="file">Drawing2*</button>
    <div class="file-active">
      <button>基础练习19*</button>
      <button class="file-close" aria-label="关闭">✕</button>
    </div>
    <button class="file last">Drawing3*</button>
    <i class="slash"></i>
    <button class="add" aria-label="新图形">{@render icon("plus", 18)}</button>
    <i class="slash"></i>
  </nav>

  <main class="canvas">
    <svg class="drawing" viewBox="0 253 1920 655" preserveAspectRatio="xMidYMid slice">
      <defs>
        <marker id="arrow" markerUnits="userSpaceOnUse" markerWidth="14" markerHeight="6" refX="13" refY="3" orient="auto-start-reverse">
          <path d="M0 0l13 3L0 6z" fill="#fff" />
        </marker>
      </defs>
      <path class="thin" d={extensions} />
      {#each dims as [x1, y1, x2, y2, label, tx, ty, angle]}
        <line class="thin arrows" {x1} {y1} {x2} {y2} />
        <text class="dim" transform="translate({tx} {ty}) rotate({angle})">{label}</text>
      {/each}
      <text class="dim" x="787" y="360">6</text>
      {#each arcs as [d, label, tx, ty, angle]}
        <path class="thin arrows" {d} />
        <text class="dim" transform="translate({tx} {ty}) rotate({angle})">{label}</text>
      {/each}
      <polygon class="solid" points={outline} />
      <polygon class="solid" points={slot} />
      <polygon class="solid" points={pocket} />
      <path class="hidden-line" d="M794 507.5H886" />

      <g class="cursor">
        <path d="M1464.5 253V858M1464.5 877V908M0 867.5H1455M1474 867.5H1920" />
        <rect x="1455.5" y="858.5" width="18" height="18" />
      </g>
      <g class="cursor">
        <path d="M18.5 827V889.5H80" />
        <rect x="13.5" y="883.5" width="11" height="12" />
        <text class="axis" x="27" y="823">Y</text>
        <text class="axis" x="92" y="888">X</text>
      </g>
    </svg>

    <div class="cube">
      <span class="north">北</span>
      <span class="west">西</span>
      <button class="top">上</button>
      <span class="east">东</span>
      <span class="south">南</span>
    </div>
    <button class="wcs">WCS <span>▽</span></button>
    <div class="navbar">
      <i class="dot"></i>
      <button aria-label="全导航控制盘">{@render icon("steering", 28)}</button>
      <i class="tick"></i>
      <button class="sep" aria-label="平移">{@render icon("pan", 28)}</button>
      <button aria-label="范围缩放">{@render icon("zoomExt", 28)}</button>
      <i class="tick"></i>
      <button aria-label="动态观察">{@render icon("orbit", 28)}</button>
      <i class="tick"></i>
      <button class="sep" aria-label="ShowMotion">{@render icon("motion", 28)}</button>
      <i class="dot"></i>
    </div>
  </main>

  <section class="command">
    <div class="grip">
      <i class="dots"></i>
      <button aria-label="关闭">✕</button>
      <button aria-label="自定义">{@render icon("wrench")}</button>
    </div>
    <div class="console">
      <div class="history">
        {#each history as parts}
          <p>{#each parts as part, i}{#if i % 2}<span>{part}</span>{:else}{part}{/if}{/each}</p>
        {/each}
      </div>
      <label class="entry">
        {@render icon("prompt")}
        <svg class="icon" width="10" height="7" viewBox="0 0 10 7"><path d="M0 0h10L5 7z" fill="#555" /></svg>
        <input type="text" placeholder="键入命令" aria-label="命令" />
      </label>
    </div>
  </section>

  <footer class="status">
    <button class="burger" aria-label="布局菜单">{@render icon("menu")}</button>
    <button class="layout-active">模型</button>
    <button class="layout">布局1</button>
    <i class="slash"></i>
    <button class="layout">CAD江老师</button>
    <i class="slash"></i>
    <button class="add" aria-label="新建布局">{@render icon("plus", 18)}</button>
    <i class="slash"></i>
    <div class="status-right">
      <button class="st-text">模型</button>
      {#each statusGroups as items}
        <div class="st-group">
          {#each items as [name, on]}
            {#if name === "caret"}
              <button class="st-drop" aria-label="选项">{@render caret(10)}</button>
            {:else if name === "ratio"}
              <button class="st-ratio">1:1 {@render caret(10)}</button>
            {:else}
              <button class="st" class:on class:wide={name === "hardware" || name === "monitor"} aria-label={name}>{@render icon(name)}</button>
            {/if}
          {/each}
        </div>
      {/each}
    </div>
  </footer>

  <footer class="taskbar">
    <button class="start" aria-label="开始">{@render icon("windows")}</button>
    <button class="start" aria-label="搜索">{@render icon("find")}</button>
    {#each ["explorer", "wechat", "tool", "browser"] as app}
      <button class="task" aria-label={app}>{@render icon(app)}</button>
    {/each}
    <button class="task current" aria-label="AutoCAD">
      <svg class="icon" width="20" height="24" viewBox="0 0 20 24">
        <path d="M1 0h18v24H1z" fill="#e02d55" />
        <path d="M1 17h18v7H1z" fill="#8f1730" />
        <text x="10" y="13" class="task-a">A</text>
        <text x="10" y="23" class="task-cad">CAD</text>
      </svg>
    </button>
    <div class="tray">
      {#each ["chevron", "mic", "battery", "wifi", "sound"] as name}
        <button aria-label={name}>{@render icon(name)}</button>
      {/each}
      <button class="ime">英</button>
      <button class="wubi"><span>五</span></button>
      <button class="notice" aria-label="通知">{@render icon("notice")}</button>
      <i class="desktop"></i>
    </div>
  </footer>
</div>

<style>
  :global(body) {
    margin: 0;
    background: #000;
  }
  .app {
    min-height: 100vh;
    display: flex;
    flex-direction: column;
    background: #222933;
    color: #e6e9ee;
    font-family: "Noto Sans", "Noto Sans CJK SC", sans-serif;
    font-size: 15px;
    line-height: 20px;
    overflow: hidden;
  }
  button,
  input,
  select {
    font: inherit;
    color: inherit;
    background: none;
    border: 0;
    padding: 0;
    margin: 0;
  }
  button {
    display: flex;
    align-items: center;
    justify-content: center;
    white-space: nowrap;
    flex: none;
  }
  .icon {
    display: block;
    flex: none;
    overflow: visible;
  }

  /* title bar */
  .titlebar {
    height: 34px;
    display: flex;
    align-items: center;
  }
  .logo-btn {
    margin-left: 18px;
    gap: 5px;
  }
  .logo-a {
    font: bold 16px "Liberation Sans", sans-serif;
    fill: #fff;
    text-anchor: middle;
  }
  .quick {
    display: flex;
    gap: 10px;
    margin-left: 13px;
  }
  .quick .mini {
    width: 10px;
    margin-left: -2px;
    margin-right: -4px;
  }
  .quick .customize {
    margin-left: 2px;
  }
  .share {
    color: #7cc0f2;
    gap: 7px;
    margin-left: 14px;
  }
  h1 {
    flex: 1;
    margin: 0;
    display: flex;
    justify-content: center;
    gap: 16px;
    padding-left: 6px;
    font-size: 16px;
    font-weight: 400;
  }
  .doc {
    font-size: 15px;
  }
  .search {
    width: 219px;
    height: 26px;
    margin-left: 8px;
    padding-left: 4px;
    background: #474f61;
    font-style: italic;
  }
  .search::placeholder {
    color: #b9bfca;
    opacity: 1;
  }
  .find {
    margin-left: 5px;
  }
  .login {
    margin-left: 10px;
    gap: 7px;
  }
  .login :global(svg:last-child) {
    margin-left: 69px;
  }
  .cart {
    margin-left: 12px;
  }
  .apps {
    gap: 8px;
    margin-left: 8px;
    padding-right: 12px;
    border-right: 1px solid #4a515c;
  }
  .help {
    gap: 9px;
    margin-left: 12px;
  }
  .help-mark {
    width: 20px;
    height: 20px;
    border-radius: 50%;
    background: #dcdfe4;
    color: #222933;
    font-weight: 600;
  }
  .win {
    display: flex;
    color: #eef0f4;
  }
  .win-main {
    gap: 38px;
    margin-left: 44px;
    margin-right: 19px;
  }
  .win-doc {
    gap: 21px;
    margin-left: auto;
    margin-right: 11px;
  }

  /* menus and tabs */
  .menubar {
    box-sizing: border-box;
    height: 27px;
    display: flex;
    align-items: center;
    padding-top: 2px;
    padding-left: 15px;
    border-bottom: 1px solid #434b57;
    color: #b4b8c0;
  }
  .menubar > button {
    margin-right: 28px;
  }
  .menubar > button:nth-child(n + 7) {
    margin-right: 29px;
  }
  .menubar > button:nth-child(13) {
    margin-right: 21px;
  }
  .tabs {
    height: 30px;
    display: flex;
    align-items: flex-end;
    padding-left: 4px;
    color: #b4b8c0;
  }
  .tabs button {
    height: 25px;
    padding: 0 12px 2px;
  }
  .tabs .active {
    padding: 0 11px 2px;
    background: #3b4453;
    color: #f2f4f7;
  }
  .tabs .collapse {
    margin-left: 22px;
    gap: 5px;
  }
  .collapse span {
    width: 19px;
    height: 9px;
    background: #f0f4fa;
    color: #333;
    font-size: 7px;
    line-height: 9px;
  }

  /* ribbon */
  .ribbon {
    height: 124px;
    display: flex;
    background: #3b4453;
  }
  .panel {
    box-sizing: border-box;
    display: flex;
    flex-direction: column;
    flex: none;
    border-left: 1px solid #262e39;
  }
  .panel-body {
    height: 95px;
    padding-top: 4px;
    display: flex;
  }
  .big {
    width: 50px;
    flex-direction: column;
    justify-content: flex-start;
    padding-top: 2px;
  }
  .big-label {
    margin-top: 4px;
    margin-bottom: 4px;
  }
  .col {
    display: flex;
    flex-direction: column;
  }
  .tool {
    display: flex;
    height: 31px;
  }
  .tool-main {
    gap: 7px;
  }
  .tool-drop {
    flex: 1;
  }
  .row {
    display: flex;
    align-items: center;
    height: 31px;
  }
  .panel-title {
    height: 25px;
    display: flex;
    align-items: center;
    padding-right: 4px;
  }
  .panel-name {
    flex: 1;
    gap: 8px;
  }
  .launcher {
    width: 12px;
  }
  .draw {
    width: 264px;
  }
  .draw .panel-body {
    padding-left: 2px;
  }
  .draw .big:nth-child(4) {
    width: 56px;
  }
  .draw .col {
    width: 46px;
    margin-left: 6px;
  }
  .modify {
    width: 284px;
  }
  .modify .panel-body {
    display: grid;
    grid-template-columns: 75px 74px 94px 20px;
    grid-auto-rows: 31px;
    align-content: start;
    padding-left: 7px;
  }
  .annotate {
    width: 196px;
  }
  .annotate .panel-body {
    padding-left: 4px;
  }
  .annotate .big {
    width: 53px;
  }
  .annotate .col {
    width: 82px;
    margin-left: 3px;
  }
  .layers {
    width: 315px;
  }
  .layers .panel-body,
  .block .panel-body,
  .props .panel-body,
  .group .panel-body {
    padding-left: 1px;
  }
  .layers .col {
    flex: 1;
    margin-right: 3px;
  }
  .icons {
    gap: 10px;
    padding-left: 4px;
  }
  .combo {
    box-sizing: border-box;
    flex: 1;
    height: 28px;
    display: flex;
    align-items: center;
    padding: 0 2px 0 4px;
    border: 1px solid #2a323e;
    background: #4a5468;
  }
  .layers .combo {
    gap: 6px;
  }
  .combo select {
    flex: 1;
    min-width: 0;
    appearance: none;
    outline: none;
  }
  .swatch {
    width: 18px;
    height: 18px;
    background: #fff;
  }
  .props .combo {
    margin-left: 4px;
    padding-left: 8px;
    gap: 5px;
    background: #4d586c;
  }
  .rule {
    width: 80px;
    height: 1px;
    background: #e8f0fa;
    margin-right: -3px;
  }
  .rule.thick {
    height: 4px;
  }
  .block {
    width: 168px;
  }
  .block .col {
    width: 112px;
    margin-left: 4px;
  }
  .props {
    width: 305px;
  }
  .props .col {
    flex: 1;
    margin-left: 2px;
    margin-right: 4px;
  }
  .group {
    width: 85px;
  }
  .group .col {
    width: 29px;
  }
  .group .tool {
    justify-content: center;
  }
  .pressed {
    box-sizing: border-box;
    height: 28px;
    margin-top: 1px;
    background: #3d5f85;
    border: 1px solid #8cc4f0;
  }
  .pressed .tool {
    height: 26px;
  }
  .utils {
    width: 95px;
  }
  .utils .panel-body,
  .clip .panel-body {
    padding-left: 6px;
  }
  .utils .col {
    margin-left: 9px;
  }
  .clip {
    width: 109px;
  }
  .clip .col {
    width: 42px;
    margin-left: 9px;
  }
  .view {
    flex: 1;
  }
  .view .panel-body {
    padding-left: 13px;
  }
  .view .panel-name {
    flex: none;
    margin-left: 6px;
    margin-right: 8px;
  }

  /* file tabs */
  .filetabs {
    height: 33px;
    display: flex;
    align-items: center;
    border-bottom: 5px solid #3b444f;
  }
  .burger {
    margin-left: 20px;
    margin-right: 10px;
  }
  .slash {
    width: 14px;
    height: 20px;
    background: linear-gradient(to bottom right, transparent 47%, #59616d 49%, #59616d 51%, transparent 53%);
  }
  .file {
    padding: 0 8px;
  }
  .filetabs .file,
  .file-active button {
    padding-top: 2px;
  }
  .file-active {
    display: flex;
    align-items: center;
    align-self: flex-end;
    height: 30px;
    margin-left: 17px;
    padding: 0 14px 2px 20px;
    gap: 10px;
    background: #3b4453;
    clip-path: polygon(11px 0, 100% 0, calc(100% - 11px) 100%, 0 100%);
    font-weight: 700;
  }
  .file-close {
    color: #c4cad4;
    font-size: 14px;
  }
  .last {
    padding-right: 24px;
  }
  .add {
    margin: 0 9px;
  }

  /* drawing area */
  .canvas {
    position: relative;
    flex: 1;
    min-height: 0;
    display: flex;
    background: #000;
  }
  .drawing {
    display: block;
    flex: 1;
    width: 100%;
  }
  .solid {
    fill: none;
    stroke: #fff;
    stroke-width: 3;
  }
  .thin {
    fill: none;
    stroke: #e4e4e4;
  }
  .arrows {
    marker-start: url(#arrow);
    marker-end: url(#arrow);
  }
  .hidden-line {
    stroke: #a33b3b;
    stroke-dasharray: 4 2;
  }
  .dim {
    fill: #fff;
    font: 300 23px Roboto, "Noto Sans", sans-serif;
    text-anchor: middle;
  }
  .cursor path,
  .cursor rect {
    fill: none;
    stroke: #f0f0f0;
  }
  .axis {
    fill: #fff;
    font: 300 22px Roboto, "Noto Sans", sans-serif;
    text-anchor: middle;
  }
  .cube {
    position: absolute;
    top: 21px;
    right: 22px;
    box-sizing: border-box;
    width: 110px;
    height: 110px;
    border: 12px solid #333;
    border-radius: 50%;
    color: #c9c9c9;
    font-size: 17px;
  }
  .cube span {
    position: absolute;
  }
  .north {
    top: -18px;
    left: 34px;
  }
  .south {
    bottom: -20px;
    left: 34px;
  }
  .west {
    left: -18px;
    top: 34px;
  }
  .east {
    right: -17px;
    top: 34px;
  }
  .top {
    width: 48px;
    height: 48px;
    margin: 19px;
    background: #a3a3a3;
    color: #3a3f4a;
    font-size: 28px;
    font-weight: 300;
  }
  .wcs {
    position: absolute;
    top: 156px;
    right: 48px;
    width: 58px;
    height: 21px;
    gap: 6px;
    border-radius: 5px;
    border: 1px solid #adb0ba;
    background: #8c8d99;
    color: #4a4b55;
    font-size: 13px;
  }
  .wcs span {
    font-size: 10px;
    color: #aeb0bc;
  }
  .navbar {
    position: absolute;
    top: 209px;
    right: 4px;
    box-sizing: border-box;
    width: 40px;
    height: 259px;
    padding: 2px 0;
    display: flex;
    flex-direction: column;
    justify-content: space-between;
    align-items: center;
    border-radius: 4px;
    border: 1px solid #525252;
    background: #454545;
  }
  .navbar .sep {
    width: 38px;
    padding-top: 4px;
    border-top: 1px solid #525252;
  }
  .dot {
    width: 6px;
    height: 6px;
    margin-left: 26px;
    border: 1px solid #2c2c2c;
    border-radius: 50%;
  }
  .tick {
    border: 3px solid transparent;
    border-top-color: #2c2c2c;
    border-bottom: 0;
  }

  /* command line */
  .command {
    display: flex;
    border-top: 6px solid #3b4450;
    border-bottom: 6px solid #3b4450;
    background: #2d3540;
  }
  .grip {
    box-sizing: border-box;
    width: 31px;
    display: flex;
    flex-direction: column;
    align-items: center;
    padding: 4px 3px 0 0;
  }
  .grip button {
    height: 29px;
    width: 28px;
    font-size: 15px;
    font-weight: 700;
  }
  .dots {
    width: 22px;
    height: 8px;
    margin-left: 3px;
    background: radial-gradient(circle, #d0d4da 1px, transparent 1px) 0 0 / 4px 4px;
  }
  .console {
    flex: 1;
    margin-right: 2px;
  }
  .history {
    box-sizing: border-box;
    height: 61px;
    padding: 4px 4px 0;
    background: #c9c9ca;
    color: #111;
    font: 15px/19px "Liberation Mono", "Noto Sans CJK SC", monospace;
    border-bottom: 1px solid #444;
  }
  .history p {
    margin: 0;
    height: 19px;
    white-space: nowrap;
  }
  .history span {
    font-size: 16px;
  }
  .entry {
    height: 25px;
    display: flex;
    align-items: center;
    gap: 2px;
    padding-left: 5px;
    background: #fff;
    color: #222;
  }
  .entry input {
    flex: 1;
    margin-left: 8px;
    outline: none;
    font-size: 16px;
    font-style: italic;
  }
  .entry input::placeholder {
    color: #777;
    opacity: 1;
  }

  /* status bar */
  .status {
    box-sizing: border-box;
    height: 35px;
    display: flex;
    align-items: center;
    padding-bottom: 5px;
  }
  .layout-active {
    width: 73px;
    height: 30px;
    background: #3b4453;
    clip-path: polygon(11px 0, 100% 0, calc(100% - 11px) 100%, 0 100%);
    font-weight: 600;
  }
  .layout {
    padding: 0 9px;
  }
  .status-right {
    align-self: flex-start;
    display: flex;
    gap: 3px;
    height: 30px;
    margin-top: 2px;
    margin-left: auto;
    margin-right: 2px;
  }
  .st-text,
  .st-group {
    display: flex;
    background: #3b4453;
  }
  .st-text {
    padding: 0 2px;
  }
  .st {
    width: 30px;
  }
  .st.on {
    width: 29px;
    background: #5f8fc9;
  }
  .st.wide {
    width: 33px;
  }
  .st-drop {
    width: 19px;
  }
  .st-ratio {
    width: 43px;
    gap: 5px;
  }

  /* taskbar */
  .taskbar {
    height: 39px;
    display: flex;
    background: #212121;
  }
  .start {
    width: 37px;
    padding-left: 6px;
  }
  .start + .start {
    margin-left: 5px;
    margin-right: 22px;
  }
  .task {
    width: 36px;
    margin-right: 10px;
    box-sizing: border-box;
    border-bottom: 3px solid #76aee0;
  }
  .task.current {
    width: 45px;
    margin-left: -5px;
    background: #4a4a4a;
  }
  .task-a {
    font: bold 12px "Liberation Sans", sans-serif;
    fill: #fff;
    text-anchor: middle;
  }
  .task-cad {
    font: bold 6px "Liberation Sans", sans-serif;
    fill: #fff;
    text-anchor: middle;
  }
  .tray {
    display: flex;
    align-items: center;
    margin-left: auto;
    gap: 10px;
  }
  .ime {
    margin-left: -3px;
    font-size: 20px;
    font-weight: 500;
  }
  .wubi {
    margin-left: 7px;
  }
  .wubi span {
    width: 18px;
    height: 18px;
    background: #fff;
    color: #222;
    font-weight: 700;
    line-height: 17px;
  }
  .notice {
    margin-left: 18px;
  }
  .desktop {
    width: 5px;
    margin-left: 15px;
    height: 100%;
    border-left: 1px solid #5a5a5a;
  }
</style>
